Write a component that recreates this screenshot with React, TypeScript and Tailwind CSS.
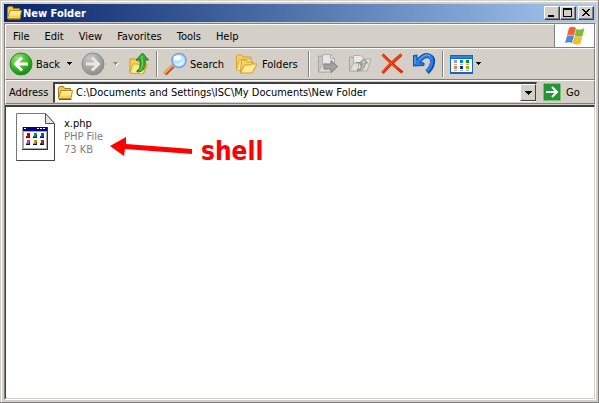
import type { ReactNode } from 'react';

const menus = ['File', 'Edit', 'View', 'Favorites', 'Tools', 'Help'];

const band = 'border border-t-white border-l-white border-r-[#808080] border-b-[#808080]';

function FolderIcon() {
  return (
    <svg className="w-4 h-4 shrink-0" viewBox="0 0 16 16" aria-hidden="true">
      <path d="M1.5 13V3l1-1.5h4l1 2h6V6" fill="#f0c850" stroke="#a87b17" />
      <path d="M1.5 13.5 4 5.5h11.5l-1.5 8z" fill="#ffe887" stroke="#b98a20" />
      <path d="M4.7 6.5h9.6" stroke="#fff8cf" />
      <path d="M3 11.5h10.5" stroke="#f5cf55" strokeWidth="2" />
      <path d="M2 14.5h12.5" stroke="#795b18" />
    </svg>
  );
}

function Arrow({ muted = false }: { muted?: boolean }) {
  return (
    <svg className="w-[6px] h-1 shrink-0" viewBox="0 0 6 4" shapeRendering="crispEdges" aria-hidden="true">
      {muted && <path d="M1 1h5v1H5v1H4v1H3V3H2V2H1z" fill="#fff" />}
      <path d="M0 0h5v1H4v1H3v1H2V2H1V1H0z" fill={muted ? '#929292' : '#000'} />
    </svg>
  );
}

function RoundArrow({ forward = false }: { forward?: boolean }) {
  const id = forward ? 'forward' : 'back';
  return (
    <svg className="w-6 h-6 shrink-0" viewBox="0 0 24 24" aria-hidden="true">
      <defs>
        <radialGradient id={id} cx=".35" cy=".25" r=".8">
          <stop offset="0" stopColor={forward ? '#c8c8c6' : '#9be27c'} />
          <stop offset=".55" stopColor={forward ? '#a6a6a4' : '#3fb62b'} />
          <stop offset="1" stopColor={forward ? '#8c8c8a' : '#138411'} />
        </radialGradient>
      </defs>
      <circle cx="12" cy="12" r="11" fill={`url(#${id})`} stroke={forward ? '#8d8d8b' : '#23921e'} />
      <path
        d={forward ? 'M5 12h12M11 5.5l6.5 6.5-6.5 6.5' : 'M19 12H7M13 5.5 6.5 12l6.5 6.5'}
        fill="none"
        stroke={forward ? '#e9e8e4' : '#fff'}
        strokeWidth="3"
      />
    </svg>
  );
}

function UpIcon() {
  return (
    <svg className="w-6 h-6" viewBox="0 0 24 24" aria-hidden="true">
      <path d="M3 21V7h5l2 2h8v3l2 1-3 8z" fill="#f7cf57" stroke="#c99a28" />
      <path d="m3 21 3-9h5l1 1 8-1-4 10z" fill="#ffeb92" stroke="#d8a92e" />
      <path d="M10 18.5c3-1 3.500-4 3-10.500H9l6.500-7 6 7H18c1 8-2 12-8 12z" fill="#37ad35" stroke="#187c1c" />
      <path d="M15 4v4c1 5 0 8-2 10" fill="none" stroke="#84db6c" />
    </svg>
  );
}

function SearchIcon() {
  return (
    <svg className="w-6 h-6" viewBox="0 0 24 24" aria-hidden="true">
      <path d="m2 22 8-8" stroke="#a5592d" strokeWidth="4" />
      <path d="m1.5 21 8-8" stroke="#f3a45b" strokeWidth="2.5" />
      <circle cx="16" cy="8.5" r="7" fill="#b4e4fc" stroke="#8099df" strokeWidth="1.6" />
      <path d="M12 12c5 0 8-3 9-6 1 7-5 10-9 6" fill="#d7faff" />
      <ellipse cx="14.5" cy="6" rx="4" ry="2.5" fill="#fff" />
    </svg>
  );
}

function FoldersIcon() {
  return (
    <svg className="w-6 h-6" viewBox="0 0 24 24" aria-hidden="true">
      <path d="M2.5 18V4l1-1h4L9 5h8v4l-9 9z" fill="#f9cf50" stroke="#d5a135" />
      <path d="m2.5 18 3-10 12-1v4L7 19z" fill="#ffec9a" stroke="#dfaf3c" />
      <path d="m6.5 21 1-13h4l1.5 2h6v4z" fill="#fbd45f" stroke="#d49c2e" />
      <path d="m6.5 21 4-8h5l2-1H23l-5 9z" fill="#ffed98" stroke="#d49c2e" />
    </svg>
  );
}

function MoveIcon() {
  return (
    <svg className="w-6 h-6" viewBox="0 0 24 24" aria-hidden="true">
      <path d="M2.5 20V4h3l1 2h4v14z" fill="#c7c7c4" stroke="#a5a5a3" />
      <path d="M6.5 2.5h8l4 4V18h-12z" fill="#e6e6e3" stroke="#adadab" />
      <path d="M14.5 2.5v4h4" fill="none" stroke="#adadab" />
      <path d="m2.5 20 4-8 12 1-2 7z" fill="#dbdbd7" stroke="#adadab" />
      <path d="M8 12h7V8.5l6.5 6-6.5 6V17H8z" fill="#a2a2a0" stroke="#7f7f7d" />
    </svg>
  );
}

function CopyIcon() {
  return (
    <svg className="w-6 h-6" viewBox="0 0 24 24" aria-hidden="true">
      <path d="M1.5 19V5h3l1 2h4v12z" fill="#cececb" stroke="#a5a5a3" />
      <path d="M5.5 3.5h7l4 3V18h-11z" fill="#e9e9e5" stroke="#b0b0ad" />
      <path d="m1.5 19 4-8h5v8zM12 19l2-10h3l1-2h5l-4 12z" fill="#dfdfda" stroke="#adadab" />
      <path d="M9 17.5c4 0 5-2 5-6.5h-2.5l4-4 4 4H17c0 5-3 8-8 8M8 10.5h3l2 3" fill="#c4c4c1" stroke="#858583" />
    </svg>
  );
}

function DeleteIcon() {
  return (
    <svg className="w-6 h-6" viewBox="0 0 24 24" aria-hidden="true">
      <path d="M2.5 2.5c6 6 12 12 20 18M21.5 2.5C15 8 8 14 2.5 21" fill="none" stroke="#e32b08" strokeWidth="3" />
      <path d="M2 2.5c5 5 10 10 15 14M21 2.5C15 8 8 13 2.5 20" fill="none" stroke="#ff5a2d" />
    </svg>
  );
}

function UndoIcon() {
  return (
    <svg className="w-6 h-6" viewBox="0 0 24 24" aria-hidden="true">
      <path d="M6 10c4-6 8-7 11-6 6 2 4 11-2 16" fill="none" stroke="#0d4db0" strokeWidth="5" />
      <path d="M1.5 3.5 5 3v4.5l3 3 4 .5v2.5L1.5 14z" fill="#2874dc" stroke="#0d4db0" />
      <path d="M5 11c5-7 9-8 12-7 5 2 3 10-2 15" fill="none" stroke="#2c7ee4" strokeWidth="3" />
      <path d="M3 5v7M7 8c4-5 8-6 11-4" fill="none" stroke="#71b4f7" />
    </svg>
  );
}

function ViewsIcon() {
  const tiles = ['#9999cc', '#0080e0', '#009900', '#ff7847', '#003399', '#cc9900'];
  return (
    <svg className="w-[23px] h-[19px] shrink-0" viewBox="0 0 23 19" shapeRendering="crispEdges" aria-hidden="true">
      <rect width="23" height="19" rx="1" fill="#1166cb" />
      <path d="M1 1h21v2H1z" fill="#2684e6" />
      <path d="M1 4h21v13H1z" fill="#fff" />
      {tiles.map((color, i) => {
        const x = 4 + (i % 3) * 6;
        const y = 5 + Math.floor(i / 3) * 6;
        return (
          <g key={color}>
            <rect x={x} y={y} width="3" height="3" fill={color} />
            <rect x={x} y={y + 4} width="3" height="1" fill="#b0b0b0" />
          </g>
        );
      })}
    </svg>
  );
}

function WindowsLogo() {
  return (
    <svg className="w-5 h-5" viewBox="0 0 20 20" aria-hidden="true">
      <path d="M4 2c3-2 5-1 7 0L9 9.5c-2-1-4-1-7 0z" fill="#f06438" />
      <path d="M11.5 3c3 1 5 1 8-1l-2 8c-3 1-5 1-8 0z" fill="#7bbb35" />
      <path d="M2 10c3-1 5-1 7 0l-2 7c-2-1-4-1-7 0z" fill="#498cda" />
      <path d="M9.5 10.5c3 1 5 1 8 0l-2 7c-3 2-5 1-8 0z" fill="#f7bd32" />
    </svg>
  );
}

function PhpFileIcon() {
  const dots = ['#cc0000', '#008b95', '#0055cc', '#e02ab0', '#b7a100', '#c51724'];
  return (
    <svg className="w-10 h-12 shrink-0" viewBox="0 0 40 48" aria-hidden="true">
      <path d="M.5.5h29l9 10v37H.5z" fill="#fff" stroke="#777" />
      <path d="M29.5.5v10h9z" fill="#e5e5e5" stroke="#555" />
      <path d="M38.5 11v36.500H.5" fill="none" stroke="#444" />
      <g shapeRendering="crispEdges">
        <path d="M6 14h26v23H6z" fill="#333" />
        <path d="M6 14h25v22H6z" fill="#a8a8a8" />
        <path d="M7 14h24v4H7z" fill="#000080" />
        <path d="M8 19h22v16H8z" fill="#fff" />
        <path d="M8 15h2v1H8zM21 15h2v1h-2zM24 15h2v1h-2zM27 15h2v1h-2z" fill="#fff" />
        {dots.map((color, i) => {
          const x = 11 + (i % 3) * 7;
          const y = 20 + Math.floor(i / 3) * 7;
          return (
            <g key={color}>
              <path d={`M${x} ${y}h3v4h-3z`} fill={color} />
              <path d={`M${x - 1} ${y + 3}h1v1h-1z`} fill={color} />
              <path d={`M${x - 1} ${y + 4}h4v1h-4z`} fill="#111" />
              <path d={`M${x + 2} ${y + 2}h1v2h-1z`} fill="#333" />
            </g>
          );
        })}
      </g>
    </svg>
  );
}

function ToolButton({ label, className = '', children }: { label: string; className?: string; children: ReactNode }) {
  return (
    <button type="button" aria-label={label} className={`flex items-center shrink-0 ${className}`}>
      {children}
    </button>
  );
}

function CaptionButton({ label, path }: { label: string; path: string }) {
  return (
    <button
      type="button"
      aria-label={label}
      className="w-4 h-[14px] bg-[#d4d0c8] border border-t-white border-l-white border-r-[#404040] border-b-[#404040] shadow-[inset_-1px_-1px_#808080]"
    >
      <svg className="w-[14px] h-3" viewBox="0 0 14 12" shapeRendering="crispEdges" aria-hidden="true">
        <path d={path} fill="#000" />
      </svg>
    </button>
  );
}

function Divider() {
  return <div className="w-[2px] h-[26px] shrink-0 bg-[#808080] border-r border-white" />;
}

export default function App() {
  return (
    <div className="min-h-screen flex flex-col bg-[#d4d0c8] border-r border-b border-[#808080] text-black text-[11px] leading-[13px] font-['DejaVu_Sans_Condensed','DejaVu_Sans',sans-serif]">
      <div className="flex flex-col flex-1 mt-px ml-px border-t border-l border-white p-[2px]">
        <header className="flex items-center h-[18px] px-[2px] bg-linear-to-r from-[#0a246a] to-[#a6caf0]">
          <FolderIcon />
          <h1 className="flex-1 ml-px font-bold text-white">New Folder</h1>
          <div className="flex">
            <CaptionButton label="Minimize" path="M3 8h6v2H3z" />
            <CaptionButton label="Maximize" path="M2 1h9v9H2zM3 3v6h7V3z" />
            <div className="ml-[2px] flex">
              <CaptionButton label="Close" path="M3 2h2v1h1v1h2V3h1V2h2v1h-1v1H9v1H8v1h1v1h1v1h1v1H9V8H8V7H6v1H5v1H3V8h1V7h1V6h1V5H5V4H4V3H3z" />
            </div>
          </div>
        </header>

        <main className="flex flex-col flex-1 mt-px border border-t-[#808080] border-l-[#808080] border-r-white border-b-white">
          <div className="flex h-6">
            <nav className={`flex flex-1 items-center gap-[15px] pl-[7px] ${band}`}>
              {menus.map((menu) => (
                <button type="button" key={menu}>
                  {menu}
                </button>
              ))}
            </nav>
            <div className="flex items-center justify-center w-10 bg-white border-r border-b border-[#808080]">
              <WindowsLogo />
            </div>
          </div>

          <div className={`flex items-center h-8 pl-[3px] ${band}`}>
            <ToolButton label="Back" className="w-[53px] gap-[3px]">
              <RoundArrow />
              Back
            </ToolButton>
            <ToolButton label="Back history" className="ml-[5px]"><Arrow /></ToolButton>
            <ToolButton label="Forward" className="ml-2"><RoundArrow forward /></ToolButton>
            <ToolButton label="Forward history" className="ml-2 mr-2"><Arrow muted /></ToolButton>
            <ToolButton label="Up" className="mr-[5px]"><UpIcon /></ToolButton>
            <Divider />
            <ToolButton label="Search" className="w-[68px] ml-[5px] gap-[3px]">
              <SearchIcon />
              Search
            </ToolButton>
            <ToolButton label="Folders" className="w-[64px] ml-[3px] gap-1">
              <FoldersIcon />
              Folders
            </ToolButton>
            <div className="ml-[10px]"><Divider /></div>
            <div className="flex gap-2 ml-[6px] mr-[6px]">
              <ToolButton label="Move to"><MoveIcon /></ToolButton>
              <ToolButton label="Copy to"><CopyIcon /></ToolButton>
              <ToolButton label="Delete"><DeleteIcon /></ToolButton>
              <ToolButton label="Undo"><UndoIcon /></ToolButton>
            </div>
            <Divider />
            <ToolButton label="Views" className="ml-[6px] gap-[3px]">
              <ViewsIcon />
              <Arrow />
            </ToolButton>
          </div>

          <div className={`flex items-center h-6 pl-[3px] ${band}`}>
            <label htmlFor="address" className="w-[44px] shrink-0">Address</label>
            <div className="flex flex-1 items-center h-[21px] pl-[2px] bg-white border-t-2 border-l-2 border-r border-b border-t-[#404040] border-l-[#404040] border-r-[#d4d0c8] border-b-[#d4d0c8]">
              <FolderIcon />
              <input
                id="address"
                className="flex-1 min-w-0 ml-[3px] outline-none"
                defaultValue="C:\Documents and Settings\ISC\My Documents\New Folder"
              />
              <button
                type="button"
                aria-label="Show address list"
                className="flex items-center justify-center w-4 h-[17px] bg-[#d4d0c8] border border-t-white border-l-white border-r-[#404040] border-b-[#404040]"
              >
                <svg className="w-[7px] h-1" viewBox="0 0 7 4" shapeRendering="crispEdges" aria-hidden="true">
                  <path d="M0 0h7v1H6v1H5v1H4v1H3V3H2V2H1V1H0z" />
                </svg>
              </button>
            </div>
            <button type="button" className="flex items-center gap-[5px] w-[57px] pl-[6px]">
              <svg className="w-[18px] h-[18px]" viewBox="0 0 18 18" aria-hidden="true">
                <rect x=".5" y=".5" width="17" height="17" rx="1" fill="#27933b" stroke="#75c477" />
                <path d="M3 9h11M9 4l5 5-5 5" fill="none" stroke="#fff" strokeWidth="2" />
              </svg>
              Go
            </button>
          </div>

          <section className="flex flex-1 items-start mt-px pt-[6px] pl-[10px] bg-white border-t-2 border-l border-b border-r border-t-[#404040] border-l-[#404040] border-b-[#d4d0c8] border-r-[#d4d0c8]">
            <PhpFileIcon />
            <div className="mt-1 ml-2">
              <p>x.php</p>
              <p className="text-[#808080]">PHP File</p>
              <p className="text-[#808080]">73 KB</p>
            </div>
            <svg className="w-[83px] h-5 mt-6 ml-[7px]" viewBox="0 0 83 20" aria-hidden="true">
              <path d="M0 9 16 0v7l66 5v5l-67-5-1 7z" fill="#f00" />
            </svg>
            <p className="mt-6 ml-2 text-[26px] leading-[28px] font-bold text-[#f00]">shell</p>
          </section>
        </main>
      </div>
    </div>
  );
}
